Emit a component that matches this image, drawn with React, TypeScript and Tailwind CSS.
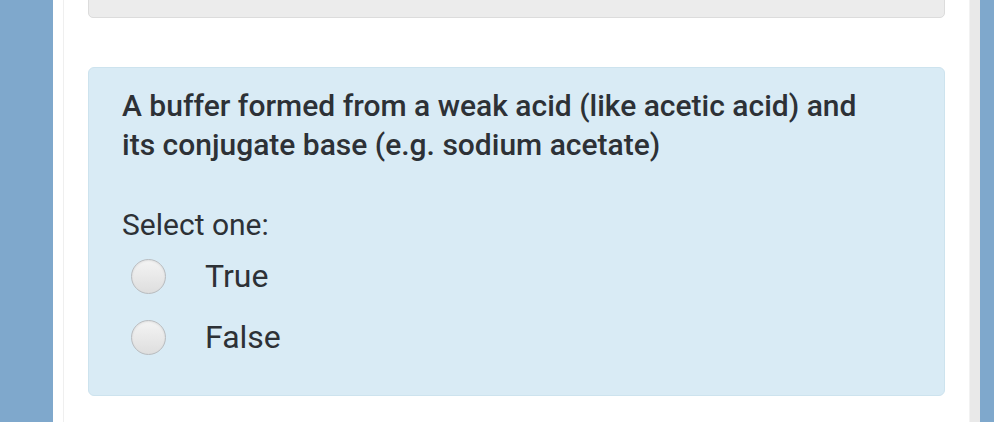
import React from 'react';

export default function App() {
  const options = ['True', 'False'];

  return (
    <div
      className="flex h-[422px] w-[994px] overflow-hidden bg-[#7fa8cc]"
      style={{ fontFamily: 'Roboto, "Liberation Sans", sans-serif' }}
    >
      {/* Left blue gutter */}
      <div className="w-[53px] shrink-0" />

      {/* Page panel */}
      <div className="flex flex-1 bg-white">
        <div className="w-[10px] shrink-0" />
        <div className="w-px shrink-0 bg-[#efefef]" />
        <div className="flex flex-1 flex-col px-[24px]">
          {/* Previous question remnant */}
          <div className="-mt-[20px] h-[38px] rounded-b-[5px] border border-[#dcdcdc] bg-[#ececec]" />

          {/* Question box */}
          <div className="mt-[49px] rounded-[6px] border border-[#cde3ee] bg-[#d9ebf5] pl-[33px] pr-[20px] pt-[18px] pb-[38px] text-[#2d3136]">
            <p className="text-[30px] font-medium leading-[39px]">
              A buffer formed from a weak acid (like acetic acid) and
              <br />
              its conjugate base (e.g. sodium acetate)
            </p>

            <p className="mt-[41px] text-[30px] leading-[40px]">Select one:</p>

            <div className="mt-[11px] flex flex-col gap-[21px]">
              {options.map((o) => (
                <label key={o} className="flex items-center">
                  <span className="ml-[9px] h-[35px] w-[35px] shrink-0 rounded-full border border-[#b9bcbf] bg-gradient-to-b from-[#f4f4f4] to-[#dedede] shadow-[inset_0_1px_2px_rgba(0,0,0,0.08)]" />
                  <span className="ml-[39px] text-[32px] leading-[40px]">{o}</span>
                </label>
              ))}
            </div>
          </div>
        </div>
        <div className="w-[1px] shrink-0 bg-[#f2f2f2]" />
        <div className="w-[10px] shrink-0 bg-[#e9e9e9]" />
      </div>

      {/* Right blue gutter */}
      <div className="w-[14px] shrink-0" />
    </div>
  );
}
